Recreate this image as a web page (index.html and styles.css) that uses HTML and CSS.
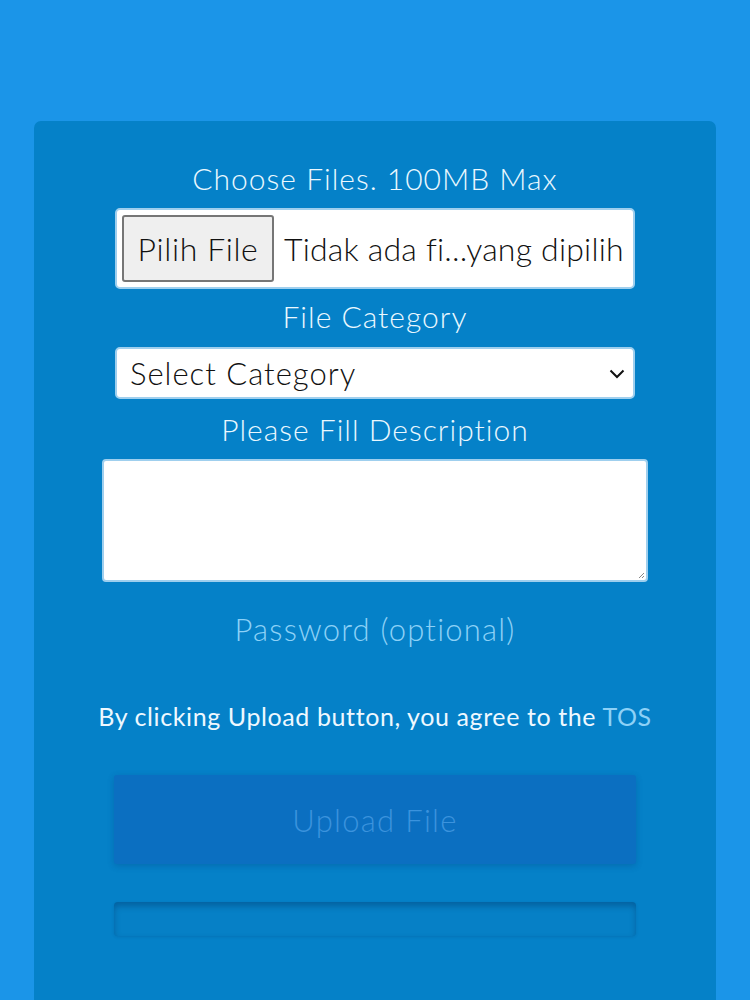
FILE: index.html
```html
<!DOCTYPE html>
<html>
<head>
<meta charset="utf-8">
<link rel="stylesheet" href="styles.css">
</head>
<body>
<div class="page">
  <div class="card">
    <div class="label">Choose Files. 100MB Max</div>
    <div class="filebox">
      <span class="filebtn">Pilih File</span>
      <span class="filename">Tidak ada fi...yang dipilih</span>
    </div>
    <div class="label l2">File Category</div>
    <div class="select">
      <span>Select Category</span>
      <svg class="chev" width="16" height="10" viewBox="0 0 16 10"><path d="M1.5 1.5 L8 8 L14.5 1.5" fill="none" stroke="#111" stroke-width="2"/></svg>
    </div>
    <div class="label l3">Please Fill Description</div>
    <div class="textarea">
      <svg class="grip" width="8" height="8" viewBox="0 0 8 8"><path d="M7 2 L2 7 M7 5 L5 7" stroke="#888" stroke-width="1"/></svg>
    </div>
    <div class="password">Password (optional)</div>
    <div class="tos">By clicking Upload button, you agree to the <span class="link">TOS</span></div>
    <div class="upload">Upload File</div>
    <div class="progress"></div>
  </div>
</div>
</body>
</html>
```

FILE: styles.css
```css
html, body {
  margin: 0;
  padding: 0;
}
body {
  background: #1b95e8;
  font-family: Lato, "Open Sans", sans-serif;
  width: 750px;
  height: 1000px;
  overflow: hidden;
}
.page {
  padding: 121px 34px 0;
}
.card {
  background: #0581c8;
  border-radius: 7px 7px 0 0;
  height: 879px;
  display: flex;
  flex-direction: column;
  align-items: center;
  padding-top: 39px;
  box-sizing: border-box;
}
.label {
  color: #eaf8ff;
  font-size: 30px;
  letter-spacing: 1px;
  line-height: 36px;
  height: 36px;
  font-weight: 300;
}
.filebox {
  margin-top: 12px;
  width: 520px;
  height: 81px;
  box-sizing: border-box;
  background: #fff;
  border: 2px solid #9fcfee;
  border-radius: 5px;
  display: flex;
  align-items: center;
  padding-left: 5px;
}
.filebtn {
  width: 152px;
  height: 67px;
  box-sizing: border-box;
  background: #efefef;
  border: 2px solid #767676;
  border-radius: 3px;
  display: flex;
  align-items: center;
  justify-content: center;
  font-size: 32px;
  letter-spacing: 0.6px;
  color: #111;
  font-weight: 300;
}
.filename {
  margin-left: 10px;
  font-size: 32px;
  letter-spacing: 0.2px;
  color: #111;
  font-weight: 300;
  white-space: nowrap;
}
.l2 { margin-top: 9px; }
.select {
  margin-top: 13px;
  width: 520px;
  height: 52px;
  box-sizing: border-box;
  background: #fff;
  border: 2px solid #9fcfee;
  border-radius: 5px;
  display: flex;
  align-items: center;
  justify-content: space-between;
  padding: 0 8px 0 13px;
  font-size: 31px;
  letter-spacing: 1px;
  color: #111;
  font-weight: 300;
}
.chev { margin-top: 2px; }
.l3 { margin-top: 12px; }
.textarea {
  margin-top: 12px;
  width: 546px;
  height: 123px;
  box-sizing: border-box;
  background: #fff;
  border: 2px solid #9fcfee;
  border-radius: 4px;
  position: relative;
}
.grip {
  position: absolute;
  right: 1px;
  bottom: 1px;
}
.password {
  margin-top: 29px;
  color: #8dd1f7;
  font-size: 31px;
  letter-spacing: 1.2px;
  line-height: 36px;
  font-weight: 300;
}
.tos {
  margin-top: 54px;
  color: #eef8ff;
  font-size: 25px;
  letter-spacing: 0.6px;
  line-height: 30px;
  font-weight: 400;
}
.link { color: #8dd1f7; }
.upload {
  margin-top: 44px;
  width: 522px;
  height: 89px;
  background: #0b6fc1;
  border-radius: 3px;
  box-shadow: 0 2px 6px rgba(0, 50, 110, 0.25);
  display: flex;
  align-items: center;
  justify-content: center;
  color: #3b93dd;
  font-size: 31px;
  letter-spacing: 1.3px;
  font-weight: 300;
}
.progress {
  margin-top: 38px;
  width: 522px;
  height: 34px;
  background: #0680c6;
  border-radius: 4px;
  box-shadow: inset 0 4px 6px rgba(0, 40, 90, 0.35), 0 1px 3px rgba(0, 40, 90, 0.15);
}
```
